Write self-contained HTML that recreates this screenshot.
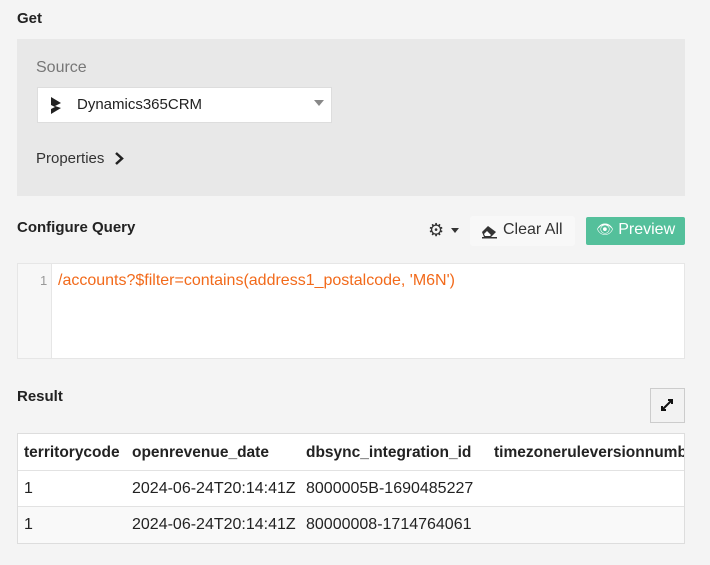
<!DOCTYPE html>
<html><head><style>
*{box-sizing:border-box;margin:0;padding:0}
body{width:710px;height:565px;background:#f4f4f4;font-family:"Liberation Sans",sans-serif;color:#222;position:relative;overflow:hidden}
.a{position:absolute}
</style></head><body>
<div class="a" style="left:17px;top:10px;font-size:15px;font-weight:bold">Get</div>
<div class="a" style="left:17px;top:39px;width:668px;height:157px;background:#e8e8e8"></div>
<div class="a" style="left:36px;top:59px;font-size:16px;color:#777">Source</div>
<div class="a" style="left:37px;top:87px;width:295px;height:36px;background:#fff;border:1px solid #ddd"></div>
<svg class="a" style="left:50px;top:97px" width="12" height="17" viewBox="0 0 12 17"><path d="M1 0 L11 6 L5 9 L11 11 L1 17 L1 12 L5 10 L1 8Z" fill="#222"/></svg>
<div class="a" style="left:77px;top:96px;font-size:15px">Dynamics365CRM</div>
<div class="a" style="left:314px;top:100px;width:0;height:0;border-left:5px solid transparent;border-right:5px solid transparent;border-top:6px solid #888"></div>
<div class="a" style="left:36px;top:150px;font-size:15px;color:#333">Properties</div>
<svg class="a" style="left:114px;top:152px" width="10" height="13"><path d="M2 1 L8 6.5 L2 12" stroke="#222" stroke-width="2.5" fill="none"/></svg>
<div class="a" style="left:17px;top:219px;font-size:15px;font-weight:bold">Configure Query</div>
<div class="a" style="left:428px;top:220px;font-size:18px;color:#333">⚙</div>
<div class="a" style="left:451px;top:228px;border-left:4px solid transparent;border-right:4px solid transparent;border-top:5px solid #333"></div>
<div class="a" style="left:470px;top:216px;width:105px;height:30px;background:#f8f8f8;border-radius:3px"></div>
<svg class="a" style="left:481px;top:223px" width="16" height="16"><path d="M1 9 L7 3 L15 9 L10 14 L3 14Z" fill="#333"/><path d="M3 11 L6 8 L10 12 L9 13 L4 13Z" fill="#fff"/><rect x="1" y="14" width="15" height="1.5" fill="#333"/></svg>
<div class="a" style="left:503px;top:221px;font-size:16px;color:#333">Clear All</div>
<div class="a" style="left:586px;top:217px;width:99px;height:28px;background:#54c09b;border-radius:2px;color:#fff;font-size:16px;padding:4px 0 0 10px"><span style="font-size:14px">👁</span> Preview</div>
<div class="a" style="left:17px;top:263px;width:668px;height:96px;background:#fff;border:1px solid #e6e6e6"></div>
<div class="a" style="left:18px;top:264px;width:34px;height:94px;background:#f7f7f7;border-right:1px solid #e6e6e6"></div>
<div class="a" style="left:40px;top:273px;font-size:13px;color:#999">1</div>
<div class="a" style="left:58px;top:272px;font-size:16px;color:#f26a1b">/accounts?$filter=contains(address1_postalcode, 'M6N')</div>
<div class="a" style="left:17px;top:388px;font-size:15px;font-weight:bold;color:#222">Result</div>
<div class="a" style="left:650px;top:388px;width:35px;height:35px;background:#f2f2f2;border:1px solid #ccc"></div>
<svg class="a" style="left:659px;top:397px" width="16" height="16"><path d="M3 13 L13 3 M9 3 L13 3 L13 7 M3 9 L3 13 L7 13" stroke="#111" stroke-width="2" fill="none"/></svg>
<div class="a" style="left:17px;top:433px;width:668px;height:111px;background:#fff;border:1px solid #ddd;overflow:hidden;font-size:16px">
<div class="a" style="left:0;top:36px;width:668px;height:1px;background:#e2e2e2"></div>
<div class="a" style="left:0;top:72px;width:668px;height:38px;background:#f9f9f9;border-top:1px solid #e2e2e2"></div>
<div class="a" style="left:6px;top:10px;font-weight:bold;white-space:nowrap;font-size:15.5px">territorycode</div>
<div class="a" style="left:114px;top:10px;font-weight:bold;font-size:15.5px">openrevenue_date</div>
<div class="a" style="left:288px;top:10px;font-weight:bold;font-size:15.5px">dbsync_integration_id</div>
<div class="a" style="left:476px;top:10px;font-weight:bold;white-space:nowrap;font-size:15.5px">timezoneruleversionnumber</div>
<div class="a" style="left:6px;top:46px">1</div>
<div class="a" style="left:114px;top:46px">2024-06-24T20:14:41Z</div>
<div class="a" style="left:288px;top:46px">8000005B-1690485227</div>
<div class="a" style="left:6px;top:82px">1</div>
<div class="a" style="left:114px;top:82px">2024-06-24T20:14:41Z</div>
<div class="a" style="left:288px;top:82px">80000008-1714764061</div>
</div>
</body></html>
